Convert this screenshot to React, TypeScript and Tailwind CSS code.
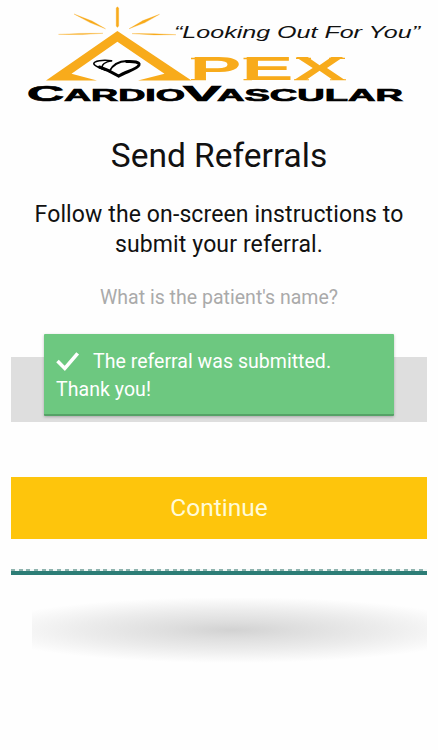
import type { ReactNode } from "react";

const GOLD = "#f8ab1b";

type WordProps = {
  x: number;
  y: number;
  width: number;
  size: number;
  children: ReactNode;
};

function WideWord({ x, y, width, size, children }: WordProps) {
  return (
    <text
      x={x}
      y={y}
      textLength={width}
      lengthAdjust="spacingAndGlyphs"
      fontSize={size}
      fontWeight="bold"
      fill="#000"
      stroke="#000"
      strokeWidth="0.7"
      className="font-['Liberation_Sans',sans-serif]"
    >
      {children}
    </text>
  );
}

function Logo() {
  return (
    <svg viewBox="0 0 438 110" className="block w-full h-[110px]" role="img" aria-label="Apex CardioVascular">
      {/* Rays */}
      <g fill={GOLD} stroke={GOLD} strokeWidth="0.3">
        <path d="M117.4 6.8 L118.7 8 V26 L117.4 27.4 L116.2 26 V8 Z" />
        <path d="M74 14 L92 21 L105.5 28.8 L90 22.6 Z" />
        <path d="M159.5 14.3 L143 20.6 L129 28.8 L145 22.6 Z" />
        <path d="M58.5 34.4 L80 33.4 L103 33.3 L82 34.6 Z" />
        <path d="M132 33.6 L154 33.7 L176 34.7 L154 34.9 Z" />
      </g>

      {/* Roof */}
      <path
        d="M117.4 31 L191.5 80.4 L138 80.4 L164.5 73.8 L117.4 41.8 L71.5 73.8 L97 80.4 L46 80.4 Z"
        fill={GOLD}
      />

      {/* Heart valve emblem */}
      <g fill="none" stroke="#000" strokeLinecap="round" strokeLinejoin="round">
        <path d="M111.5 60.8 C103 59.6 93.8 60.8 93.8 63.8 C94.5 66.6 101 68.2 105.5 70.2" strokeWidth="1.6" />
        <path d="M111.5 60.8 C105.5 61.8 101 64.5 102.3 68.4" strokeWidth="1.5" />
        <path d="M99.5 67 C107 69.5 112.5 72.3 118.5 76" strokeWidth="3" />
        <path d="M109.3 71.5 C112 66 118 61.2 127 61" strokeWidth="1.8" />
        <path d="M126.5 61.5 C134 61 140 62.2 139 65 C137 69.5 126 71.5 118.8 76" strokeWidth="3" />
      </g>

      <text
        x="174"
        y="37.6"
        textLength="246"
        lengthAdjust="spacingAndGlyphs"
        fontSize="17.3"
        fill="#111"
        className="font-['Liberation_Sans',sans-serif] italic"
      >
        “Looking Out For You”
      </text>

      <g fill={GOLD}>
        <text
          x="189.5"
          y="80.2"
          textLength="156"
          lengthAdjust="spacingAndGlyphs"
          fontSize="32.5"
          className="font-['Liberation_Sans',sans-serif] font-bold"
        >
          PEX
        </text>
        {/* Small serifs on the stems */}
        <path d="M191 57.8 H204 V59.2 H191 Z M191 79 H206 V80.3 H191 Z M243.5 57.8 H252 V59.2 H243.5 Z M243.5 79 H252 V80.3 H243.5 Z" />
        <path d="M296 57.8 H311 V59 H296 Z M329 57.8 H345 V59 H329 Z M294 79.2 H309 V80.3 H294 Z M330 79.2 H346 V80.3 H330 Z" />
      </g>

      <WideWord x={27} y={100.5} width={37} size={22.5}>C</WideWord>
      <WideWord x={64} y={100.5} width={121} size={17}>ARDIO</WideWord>
      <WideWord x={183} y={100.5} width={38} size={22.5}>V</WideWord>
      <WideWord x={217} y={100.5} width={186} size={17}>ASCULAR</WideWord>
    </svg>
  );
}

function Toast() {
  return (
    <div className="absolute left-[33px] right-[33px] -top-[23px] h-[82px] bg-[#6dc880] border-b-[2px] border-[#55a266] rounded-[1px] shadow-[0_1px_3px_rgba(0,0,0,0.25)] pl-[13px] pt-[14px] text-white text-[19.5px] leading-[28px]">
      <div className="flex items-center">
        <svg viewBox="0 0 24 20" className="w-6 h-5 -ml-px mr-[13px]" fill="none" stroke="#fff" strokeWidth="3.6">
          <path d="M1.5 9 L8.8 16.4 L21.7 1.4" />
        </svg>
        <span className="tracking-[0.03px]">The referral was submitted.</span>
      </div>
      <div className="tracking-[0.05px] -ml-px">Thank you!</div>
    </div>
  );
}

export default function App() {
  return (
    <main className="w-full h-[750px] bg-[#fefefe] overflow-hidden font-['Roboto',sans-serif] text-[#111]">
      <Logo />

      <div className="px-[11px] text-center">
        <h1 className="pt-[25px] text-[33.5px] leading-[42px]">Send Referrals</h1>
        <p className="mt-[23px] text-[23px] leading-[30px] tracking-[0.12px]">
          Follow the on-screen instructions to
          <br />
          submit your referral.
        </p>
        <p className="mt-[26px] text-[19.5px] leading-[24px] tracking-[0.02px] text-[#aaa]">
          What is the patient's name?
        </p>
      </div>

      {/* Name field with the confirmation toast over it */}
      <div className="relative mx-[11px] mt-[47px] h-[65px] bg-[#dedede]">
        <Toast />
      </div>

      <div className="px-[11px] pt-[55px]">
        <button className="block w-full h-[62px] bg-[#fec50c] text-[#fffbd8] text-[24.5px] pt-px">
          Continue
        </button>
        <div className="mt-[30px] h-[2px] bg-[repeating-linear-gradient(90deg,#8fb3ae_0px,#8fb3ae_4px,#f2f8f7_4px,#f2f8f7_7.7px)]" />
        <div className="h-[4px] bg-[#2c7d76]" />
        <div className="ml-[21px] mt-[23px] h-[65px] bg-[radial-gradient(ellipse_250px_33px_at_200px_32px,#d2d2d2_0%,#dedede_25%,#ececec_60%,#fefefe_100%)]" />
      </div>
    </main>
  );
}
